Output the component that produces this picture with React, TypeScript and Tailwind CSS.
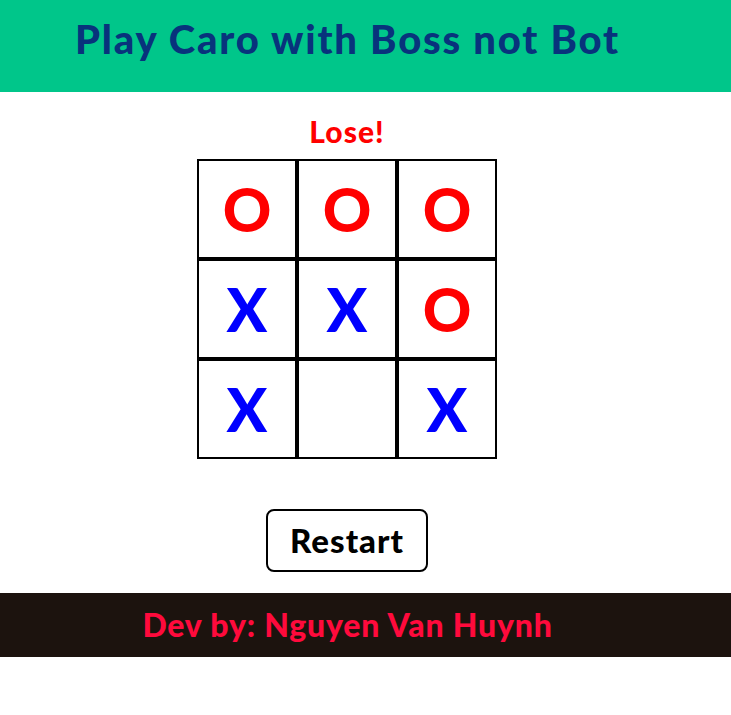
import { useState } from "react";

type Cell = "X" | "O" | null;

const initial: Cell[] = ["O", "O", "O", "X", "X", "O", "X", null, "X"];

export default function App() {
  const [board, setBoard] = useState<Cell[]>(initial);

  return (
    <div className="min-h-screen bg-white font-['Lato','Open_Sans',sans-serif]">
      {/* HEADER */}
      <header className="flex h-[92px] items-center bg-[#00c68a] pb-[14px]">
        <h1 className="w-[695px] text-center text-[40px] font-black tracking-[1.8px] text-[#08337c]">
          Play Caro with Boss not Bot
        </h1>
      </header>

      {/* GAME */}
      <main className="flex w-[694px] flex-col items-center pt-[20px]">
        <p className="h-[47px] text-[30px] leading-[38px] font-black tracking-[1px] text-[#ff0000]">
          Lose!
        </p>

        <div className="grid grid-cols-3">
          {board.map((cell, i) => (
            <button
              key={i}
              onClick={() => {}}
              className={`flex h-[100px] w-[100px] items-center justify-center border-2 border-black text-[60px] font-black ${
                cell === "X" ? "text-[#0000ff]" : "text-[#ff0000]"
              }`}
            >
              {cell}
            </button>
          ))}
        </div>

        <button
          onClick={() => setBoard(Array(9).fill(null))}
          className="mt-[50px] h-[63px] w-[162px] rounded-lg border-2 border-black text-[33px] font-black tracking-[1px] text-black"
        >
          Restart
        </button>
      </main>

      {/* FOOTER */}
      <footer className="mt-[21px] flex h-[64px] items-center bg-[#1c130e]">
        <p className="w-[695px] text-center text-[32px] font-black tracking-[0.8px] text-[#ff0a3c]">
          Dev by: Nguyen Van Huynh
        </p>
      </footer>
    </div>
  );
}
